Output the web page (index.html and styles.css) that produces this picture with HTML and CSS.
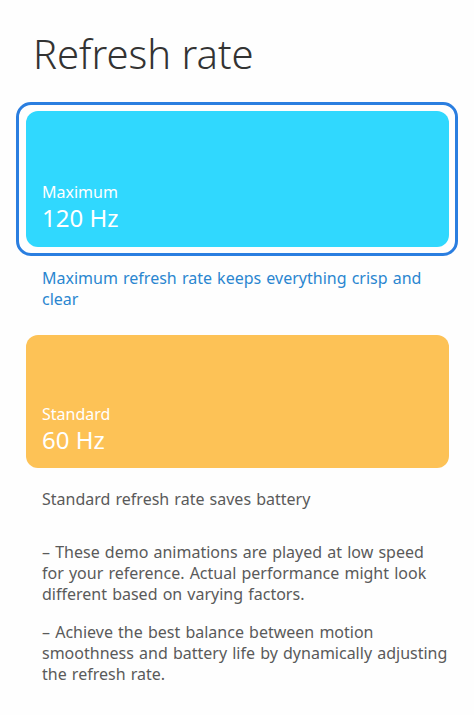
FILE: index.html
```html
<!DOCTYPE html>
<html lang="en">
<head>
<meta charset="utf-8">
<link rel="stylesheet" href="styles.css">
</head>
<body>
<main class="page">
  <h1 class="title">Refresh rate</h1>

  <div class="option option-selected">
    <div class="card card-max">
      <div class="card-label">Maximum</div>
      <div class="card-value">120 Hz</div>
    </div>
  </div>
  <p class="desc desc-active">Maximum refresh rate keeps everything crisp and clear</p>

  <div class="option">
    <div class="card card-std">
      <div class="card-label">Standard</div>
      <div class="card-value">60 Hz</div>
    </div>
  </div>
  <p class="desc">Standard refresh rate saves battery</p>

  <p class="note note-first">– These demo animations are played at low speed for your reference. Actual performance might look different based on varying factors.</p>
  <p class="note">– Achieve the best balance between motion smoothness and battery life by dynamically adjusting the refresh rate.</p>
</main>
</body>
</html>
```
FILE: styles.css
```css
html, body {
  margin: 0;
  padding: 0;
  background: #fefefe;
}
body {
  font-family: "Noto Sans", Lato, sans-serif;
  color: #5a5a5a;
}
.page {
  padding: 0 16px;
  display: flex;
  flex-direction: column;
}
.title {
  margin: 30px 0 24px 17px;
  font-size: 40px;
  line-height: 48px;
  font-weight: 300;
  color: #333333;
}
.option {
  border: 3px solid transparent;
  border-radius: 15px;
  padding: 6px 6px 6px 7px;
}
.option-selected {
  border-color: #2a7ee0;
}
.card {
  height: 136px;
  box-sizing: border-box;
  border-radius: 12px;
  padding: 0 16px 15px;
  display: flex;
  flex-direction: column;
  justify-content: flex-end;
  color: #ffffff;
}
.card-max { background: #30d8fe; }
.card-std {
  background: #fdc256;
  height: 133px;
  padding-bottom: 14px;
}
.card-label {
  font-size: 16px;
  line-height: 22px;
}
.card-value {
  font-size: 24px;
  line-height: 28px;
  margin-top: 1px;
}
.desc,
.note {
  font-size: 16px;
  line-height: 21px;
  word-spacing: 1px;
  margin-left: 26px;
  margin-right: 10px;
}
.desc {
  margin-top: 12px;
  margin-bottom: 16px;
}
.desc-active {
  color: #2a86d0;
}
.note {
  margin-top: 17px;
  margin-bottom: 0;
}
.note-first {
  margin-top: 16px;
}
```
